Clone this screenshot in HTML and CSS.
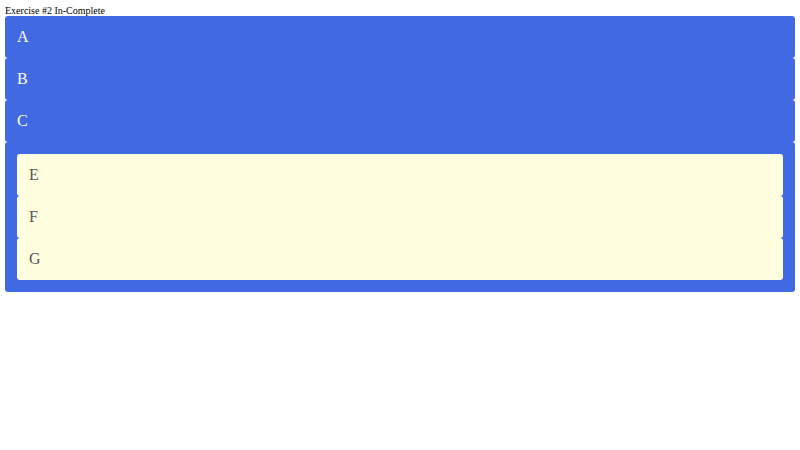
FILE: index.html
```html
<!DOCTYPE html>
<html>
<head>
<meta charset="utf-8">
<link rel="stylesheet" href="styles.css">
</head>
<body>
<div class="title">Exercise #2 In-Complete</div>
<div class="item">A</div>
<div class="item">B</div>
<div class="item">C</div>
<div class="group">
  <div class="sub">E</div>
  <div class="sub">F</div>
  <div class="sub">G</div>
</div>
</body>
</html>
```
FILE: styles.css
```css
body {
  margin: 5px;
  font-family: "Liberation Serif", "Times New Roman", serif;
  background: #ffffff;
}
.title {
  font-size: 10px;
  color: #000;
}
.item {
  background: #4169e1;
  color: #ffffff;
  font-size: 16px;
  padding: 12px;
  border-radius: 3px;
}
.group {
  background: #4169e1;
  padding: 12px;
  border-radius: 3px;
}
.sub {
  background: #ffffe0;
  color: #555555;
  font-size: 16px;
  padding: 12px;
  border-radius: 3px;
}
```
